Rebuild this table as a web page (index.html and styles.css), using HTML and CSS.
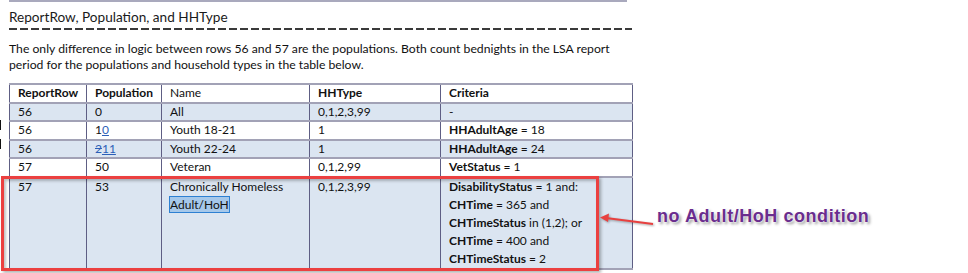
FILE: index.html
```html
<!DOCTYPE html>
<html>
<head>
<meta charset="utf-8">
<link rel="stylesheet" href="styles.css">
</head>
<body>
<div class="page">
  <div class="topbar"></div>
  <h2 class="heading">ReportRow, Population, and HHType</h2>
  <div class="dashes"></div>
  <p class="intro">The only difference in logic between rows 56 and 57 are the populations. Both count bednights in the LSA report<br>period for the populations and household types in the table below.</p>
  <table class="grid">
    <colgroup>
      <col class="c1"><col class="c2"><col class="c3"><col class="c4"><col class="c5">
    </colgroup>
    <thead>
      <tr class="head"><th>ReportRow</th><th>Population</th><th class="plain">Name</th><th>HHType</th><th>Criteria</th></tr>
    </thead>
    <tbody>
      <tr class="shade"><td>56</td><td>0</td><td>All</td><td>0,1,2,3,99</td><td>-</td></tr>
      <tr><td>56</td><td>1<span class="ins">0</span></td><td>Youth 18-21</td><td>1</td><td><b>HHAdultAge</b> = 18</td></tr>
      <tr class="shade"><td>56</td><td><span class="del">2</span><span class="ins">11</span></td><td>Youth 22-24</td><td>1</td><td><b>HHAdultAge</b> = 24</td></tr>
      <tr><td>57</td><td>50</td><td>Veteran</td><td>0,1,2,99</td><td><b>VetStatus</b> = 1</td></tr>
      <tr class="shade tall"><td>57</td><td>53</td><td>Chronically Homeless<br><span class="sel">Adult/HoH</span></td><td>0,1,2,3,99</td><td><b>DisabilityStatus</b> = 1 and:<br><b>CHTime</b> = 365 and<br><b>CHTimeStatus</b> in (1,2); or<br><b>CHTime</b> = 400 and<br><b>CHTimeStatus</b> = 2</td></tr>
    </tbody>
  </table>
  <span class="mark m1"></span>
  <span class="mark m2"></span>
  <div class="redbox"></div>
  <svg class="arrow" width="60" height="20" viewBox="0 0 60 20">
    <line x1="55" y1="14" x2="8" y2="8" stroke="#e8403f" stroke-width="2.2"/>
    <polygon points="2,7.5 11,3.5 10,12" fill="#e8403f"/>
  </svg>
  <div class="callout">no Adult/HoH condition</div>
</div>
</body>
</html>
```
FILE: styles.css
```css
html, body {
  margin: 0;
  padding: 0;
  background: #ffffff;
}
.page {
  position: relative;
  width: 968px;
  height: 273px;
  padding-left: 9px;
  box-sizing: border-box;
  font-family: Lato, "Open Sans", sans-serif;
  color: #111;
}
.topbar {
  width: 618px;
  height: 2px;
  background: #a9a9bd;
}
.heading {
  margin: 6px 0 0 0;
  font-size: 13.6px;
  font-weight: normal;
  line-height: 18px;
  color: #1a1a1a;
}
.dashes {
  margin-top: 2px;
  width: 623px;
  height: 2px;
  background: repeating-linear-gradient(90deg, #3a3a3a 0 8px, transparent 8px 11px);
}
.intro {
  margin: 11px 0 0 0;
  font-size: 12.2px;
  line-height: 15.5px;
  color: #111;
}
.grid {
  margin-top: 11px;
  border-collapse: collapse;
  width: 623px;
  font-size: 12px;
  table-layout: fixed;
}
.c1 { width: 77px; }
.c2 { width: 75px; }
.c3 { width: 148px; }
.c4 { width: 131px; }
.c5 { width: 192px; }
.grid th, .grid td {
  text-align: left;
  padding: 0 8px;
  line-height: 16.6px;
  border-top: 2px solid #a2a2b6;
  border-bottom: 2px solid #a2a2b6;
  border-left: 1px solid #5e5e84;
  border-right: 1px solid #5e5e84;
  vertical-align: top;
  white-space: nowrap;
}
.grid th {
  font-weight: bold;
}
.grid th.plain {
  font-weight: normal;
}
.shade td {
  background: #dbe5f1;
}
.tall td {
  line-height: 18px;
  height: 88px;
}
.ins {
  color: #2c5fb8;
  text-decoration: underline;
}
.del {
  color: #2c5fb8;
  text-decoration: line-through;
}
.sel {
  background: #a6c8ea;
  outline: 1px solid #2d80d2;
}
.mark {
  position: absolute;
  left: 0;
  width: 1px;
  height: 10px;
  background: #111;
}
.m1 { top: 120px; }
.m2 { top: 139px; }
.redbox {
  position: absolute;
  left: 1px;
  top: 176px;
  width: 592px;
  height: 89px;
  border: 3px solid #eb4040;
  box-shadow: inset 2px 2px 3px rgba(0,0,0,0.25), 2px 2px 3px rgba(0,0,0,0.3);
}
.arrow {
  position: absolute;
  left: 598px;
  top: 210px;
  filter: drop-shadow(1px 1px 1px rgba(0,0,0,0.35));
}
.callout {
  position: absolute;
  left: 657px;
  top: 205px;
  font-family: "Liberation Sans", Arial, sans-serif;
  font-weight: bold;
  font-size: 18px;
  letter-spacing: 0.55px;
  line-height: 22px;
  color: #6a2d8e;
  text-shadow: 0 0 2px #fff, 0 0 3px #fff, 2px 2px 3px rgba(0,0,0,0.45);
}
```
